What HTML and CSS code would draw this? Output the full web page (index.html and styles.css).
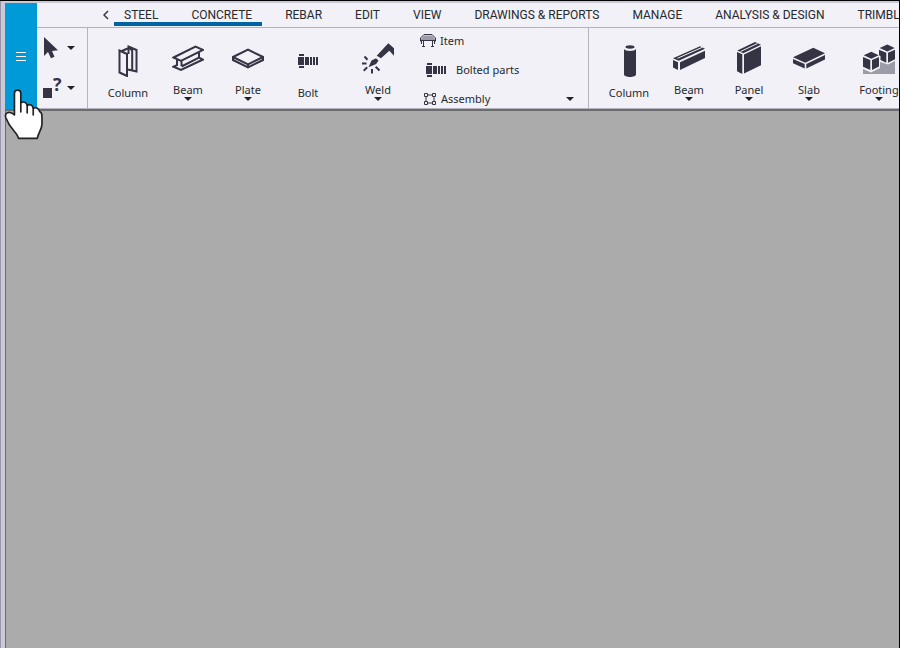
FILE: index.html
```html
<!DOCTYPE html>
<html lang="en">
<head>
<meta charset="utf-8">
<title>Ribbon</title>
<link rel="stylesheet" href="styles.css">
</head>
<body>
<div class="window">
  <header class="ribbon">
    <button class="menu" aria-label="Menu">
      <svg width="10" height="9" viewBox="0 0 10 9"><path d="M0 .5h10M0 4.5h10M0 8.5h10" stroke="#fff"/></svg>
    </button>
    <div class="main">
      <nav class="tabs">
        <button class="back" aria-label="Scroll tabs left"><svg width="6" height="10" viewBox="0 0 6 10"><path d="M5 1L1 5l4 4" class="line"/></svg></button>
        <div class="active"><a href="#steel">STEEL</a><a href="#concrete">CONCRETE</a></div>
        <a href="#rebar">REBAR</a>
        <a href="#edit">EDIT</a>
        <a href="#view">VIEW</a>
        <a href="#drawings">DRAWINGS &amp; REPORTS</a>
        <a href="#manage">MANAGE</a>
        <a href="#analysis">ANALYSIS &amp; DESIGN</a>
        <a href="#trimble">TRIMBL</a>
      </nav>
      <div class="tools">
        <div class="quick">
          <button aria-label="Select">
            <svg width="22" height="22" viewBox="0 0 22 22"><path class="fill" d="M1 0v19l4-4 3 6.300 3.500-1.500L9 14l6-.7z"/></svg>
            <i class="caret"></i>
          </button>
          <button aria-label="Inquire">
            <svg width="22" height="22" viewBox="0 0 22 22"><path class="fill" d="M0 11h9v10H0z"/><text class="mark" x="10" y="14">?</text></svg>
            <i class="caret"></i>
          </button>
        </div>
        <div class="group">
          <button class="tool">
            <svg class="icon" viewBox="0 0 32 32"><path class="line bold" d="M7.500 5.500L15 9v22l-7.500-3.500zM10 6l5.500-2.500M16.500 9V1.500L24.500 5v21.500L16 24.500M16 1.500l4.200 4v20"/></svg>
            <span>Column</span>
          </button>
          <button class="tool">
            <svg class="icon" viewBox="0 0 32 32"><path class="line bold" d="M1.500 15.500L23.500 4.500l7.500 3.300L9 19zM5 17v7M9.500 19v5M27 10v5M9.500 24.500L27 15.500l4 2L9 28l-7.500-3.300 4-1.900"/></svg>
            <span>Beam</span><i class="caret"></i>
          </button>
          <button class="tool">
            <svg class="icon" viewBox="0 0 32 32"><path class="line bold" d="M1 15l15-7.300L31 15l-15 7.300zM1 15v3l15 7.300L31 18v-3M16 22.300v3"/></svg>
            <span>Plate</span><i class="caret"></i>
          </button>
          <button class="tool">
            <svg class="icon" viewBox="0 0 32 32"><path class="fill" d="M7 9h5v2H7zM6 12h6v8H6zM7 21h5v2H7zM13 12h4v8h-4zM18 12h2v8h-2zM21 12h2v8h-2zM24 12h2v8h-2z"/></svg>
            <span>Bolt</span>
          </button>
          <button class="tool wide">
            <svg class="icon" viewBox="0 0 32 32"><path class="fill" d="M14.700 13.700L26.300 1.300l5.700 5v7.400l-4.700-5L19 16.300zM6.500 25.200L9.500 18.500l4.500-2.300 2.500 2.300-2.300 3.500z"/><path class="line bold" d="M2.500 14.500l3 3.200M0 21.500h4.500M1.700 28.700l3.500-3.400M10 27v4.500M13.700 24.700l3.800 3.800"/></svg>
            <span>Weld</span><i class="caret"></i>
          </button>
          <div class="list">
            <button><svg width="16" height="14" viewBox="0 0 16 14"><path d="M1 5l3-3.500h8L15 5v1H1z" fill="#9c9ba8"/><path class="thin" d="M.5 7.500V4L4 .5h8L15.500 4v3.500M1 6.500h14M3.500 6v6M12.500 6v6M2 12.500h3M11 12.500h3M1.500 7v3M14.500 7v3"/></svg>Item</button>
            <button class="inset"><svg width="20" height="14" viewBox="6 9 20 14"><path class="fill" d="M7 9h5v2H7zM6 12h6v8H6zM7 21h5v2H7zM13 12h4v8h-4zM18 12h2v8h-2zM21 12h2v8h-2zM24 12h2v8h-2z"/></svg>Bolted parts</button>
            <button class="split"><svg width="14" height="12" viewBox="0 0 14 12"><path class="thin" d="M1.500.5h3v3h-3zM9.500.5h3v3h-3zM1.500 8.500h3v3h-3zM9.500 8.500h3v3h-3zM4.500 2h5M4.500 10h5M3 3.500v5M11 3.500v5"/></svg>Assembly<i class="caret"></i></button>
          </div>
        </div>
        <div class="group">
          <button class="tool">
            <svg class="icon" viewBox="0 0 32 32"><path class="fill" d="M11 4v25.500c0 3.300 12 3.300 12 0V4c-1 2.500-11 2.500-12 0z"/><ellipse class="fill" cx="17" cy="2" rx="4.500" ry="1.700"/></svg>
            <span>Column</span>
          </button>
          <button class="tool">
            <svg class="icon" viewBox="0 0 32 32"><path class="fill" d="M0 18l5 2.300V28l-5-2.500zM0 16.300L27 4.300l5 2.400L5.700 18.700zM7 20.300L32 8.700V16L7 28z"/><path class="gap" d="M4.500 16.300L29.500 5.200"/></svg>
            <span>Beam</span><i class="caret"></i>
          </button>
          <button class="tool">
            <svg class="icon" viewBox="0 0 32 32"><path class="fill" d="M4 10l5.300 2.300V32L4 29.300zM4.300 8.500L22 0l6 2.700-17.700 8.500zM11 12.500l17-8.200v19l-17 8.200z"/><path class="gap" d="M7.500 9.500L24.500 1.500"/></svg>
            <span>Panel</span><i class="caret"></i>
          </button>
          <button class="tool">
            <svg class="icon" viewBox="0 0 32 32"><path class="fill" d="M0 15.300l20.300-9.600L32 11.300l-19.700 9.400zM0 17l11.700 5v4.500L0 21.300zM13.300 22L32 13v4.500l-18.700 9z"/></svg>
            <span>Slab</span><i class="caret"></i>
          </button>
          <button class="tool wide">
            <svg class="icon" viewBox="0 0 32 32"><path d="M0 27l8 3.500 9-4.500v-6l8 2.500 7-3.500v13H0z" fill="#9c9ba8"/><path class="fill" d="M.7 13.300l7.600-3.600 7.400 3.600-7.400 3.400zM0 15l7.300 3v10L0 24.700zM9 18l7-3v9.500L9 28zM16.700 6l7.600-3.600L31.700 6l-7.400 3.400zM16 7.700l7.300 3v10L17.500 18v-4L16 13.300zM25 10.700l7-3v9.500l-7 3.500z"/></svg>
            <span>Footing</span><i class="caret"></i>
          </button>
        </div>
      </div>
    </div>
  </header>
  <main class="workspace"></main>
</div>
<svg class="pointer" viewBox="8 265 122 155"><path d="M42 345V281c0-13 19-13 19 0v28c8-5 17-1 19 8 8-5 17-1 18 8 9-4 17 1 19 10 5 2 7 7 7 14v24c0 14-10 24-14 42H54c-3-18-25-26-38-62-4-14 10-22 26-8z" fill="#fff" stroke="#222" stroke-width="5" stroke-linejoin="round"/><path d="M61 309v27M80 317v22M98 325v20" stroke="#222" stroke-width="5" stroke-linecap="round"/></svg>
</body>
</html>
```
FILE: styles.css
```css
* { box-sizing: border-box; }

body {
  margin: 0;
  overflow: hidden;
  font: 11px/16px "Noto Sans", "Open Sans", sans-serif;
  color: #252a2e;
}

button {
  display: flex;
  align-items: center;
  margin: 0;
  padding: 0;
  border: 0;
  background: none;
  color: inherit;
  font: inherit;
  white-space: nowrap;
}

a { color: inherit; text-decoration: none; }
svg { display: block; flex: none; }

.window {
  display: flex;
  flex-direction: column;
  min-height: 100vh;
  padding-left: 4px;
  border: solid #000;
  border-width: 1px 1px 0 0;
  background: #cbc9d8;
  box-shadow: inset 1px 0 #9896a6;
  overflow: hidden;
}

.ribbon {
  display: flex;
  margin-left: 1px;
  padding-top: 2px;
}

.menu {
  flex: none;
  justify-content: center;
  width: 32px;
  background: #009ad9;
}

.main {
  flex: 1;
  min-width: 0;
  overflow: hidden;
  background: #f2f1f7;
  border-bottom: 1px solid #b4b3c0;
}

.tabs {
  display: flex;
  align-items: stretch;
  height: 25px;
  padding-left: 66px;
  border-bottom: 1px solid #b4b3c0;
  font: 12px/24px Roboto, "Noto Sans", sans-serif;
  white-space: nowrap;
}

.tabs > a { flex: none; margin-left: 33px; }
.back { width: 11px; }

.active {
  display: flex;
  gap: 33px;
  flex: none;
  height: 23px;
  margin-left: 5px;
  margin-right: -10px;
  padding: 0 10px;
  border-bottom: 4px solid #0063a3;
}

.tools { display: flex; height: 80px; }

.quick {
  flex: none;
  width: 51px;
  padding: 9px 0 0 6px;
  border-right: 1px solid #b4b3c0;
}

.quick button { gap: 2px; height: 22px; margin-bottom: 18px; }
.quick svg { overflow: visible; }
.mark { font: bold 18px "Open Sans", sans-serif; fill: #353445; }

.group {
  display: flex;
  flex: none;
  padding-left: 10px;
}

.group:not(:last-child) { border-right: 1px solid #b4b3c0; }

.tool {
  flex-direction: column;
  justify-content: center;
  width: 60px;
  padding-top: 10px;
}

.tool span { margin-top: 8px; }
.wide { width: 80px; }
.icon { width: 32px; height: 32px; }

.caret {
  flex: none;
  width: 8px;
  border: solid transparent;
  border-width: 4px 4px 0;
  border-top-color: #222;
}

.tool .caret { margin: -1px 0 3px; }

.list {
  display: flex;
  flex-direction: column;
  gap: 13px;
  width: 170px;
  padding: 5px 14px 0 2px;
}

.list button { gap: 4px; height: 16px; }
.list .inset { gap: 10px; padding-left: 6px; }
.list .split { padding-left: 3px; }
.split .caret { margin-left: auto; }

.fill { fill: #353445; }
.line { fill: none; stroke: #353445; stroke-width: 1.5; }
.bold { stroke-width: 2; }
.thin { fill: none; stroke: #353445; }
.gap { fill: none; stroke: #f2f1f7; }

.workspace {
  flex: 1;
  margin-left: 1px;
  border: solid #6c6c6c;
  border-width: 2px 0 0 1px;
  background: #ababab;
}

.pointer {
  position: absolute;
  left: 3px;
  top: 88px;
  width: 41px;
  height: 52px;
}
```
